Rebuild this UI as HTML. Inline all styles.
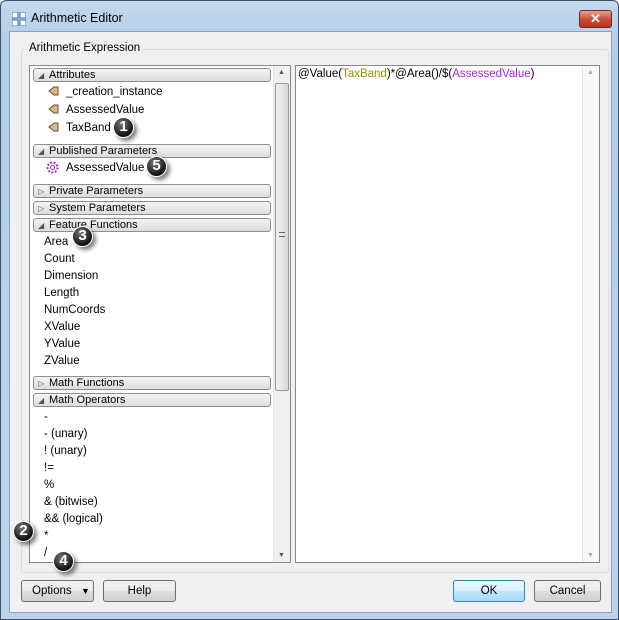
<!DOCTYPE html>
<html><head><style>
*{box-sizing:border-box}
body{margin:0;width:619px;height:620px;overflow:hidden;font-family:"Liberation Sans",sans-serif;font-size:11.5px;color:#000;background:#fff}
.win{position:absolute;left:0;top:0;width:619px;height:620px;background:linear-gradient(#c4d8ee,#b4cde8 40px,#bcd3ec);border:1px solid #3c5068;border-radius:6px 6px 0 0}
.title{position:absolute;left:30px;top:10px;font-size:12.5px}
.close{position:absolute;left:578px;top:9px;width:33px;height:18px;border:1px solid #6b2a22;border-radius:3px;background:linear-gradient(#e6a393,#c9503a 50%,#b8321c);color:#fff;font-weight:bold;text-align:center;font-size:13px;line-height:16px}
.client{position:absolute;left:8px;top:30px;width:603px;height:582px;background:#f0f0f0;border:1px solid #8aa0b8}
.grp{position:absolute;left:11px;top:17px;width:588px;height:524px;border:1px solid #d5dfe5;border-radius:3px}
.grpl{position:absolute;left:17px;top:10px;background:#f0f0f0;padding:0 2px}
.box{position:absolute;background:#fff;border:1px solid #828790}
.sb{position:absolute;right:0;top:0;width:17px;height:100%;background:#f0f0f0;border-left:1px solid #e4e4e4}
.thumb{position:absolute;left:1px;top:17px;width:14px;height:308px;border:1px solid #979797;border-radius:2px;background:linear-gradient(90deg,#f2f2f2,#d8d8d8)}
.hdr{position:absolute;left:3px;width:238px;height:14px;border:1px solid #8e8f8f;border-radius:3px;background:linear-gradient(#f4f4f4,#dcdcdc);font-size:11px;line-height:12px;padding-left:15px}
.hdr i{position:absolute;left:4px;top:1px;font-style:normal;font-size:8px;color:#555}
.it{position:absolute;left:14px;font-size:11.5px}
.it2{position:absolute;left:36px}
.dia{position:absolute;left:18px;width:11px;height:10px}
.btn{position:absolute;top:548px;height:22px;border:1px solid #707070;border-radius:3px;background:linear-gradient(#f2f2f2,#ebebeb 50%,#dddddd 51%,#cfcfcf);text-align:center;line-height:20px;font-size:11.5px}
.badge{position:absolute;width:21px;height:21px;border-radius:50%;background:radial-gradient(circle at 40% 30%,#777,#111 70%);border:1.5px solid #fff;color:#fff;font-weight:bold;font-size:15px;text-align:center;line-height:18px;box-shadow:3px 3px 4px rgba(0,0,0,.5)}
</style></head><body>
<div class="win">
<svg style="position:absolute;left:11px;top:11px" width="14" height="14"><rect x="0" y="0" width="6" height="6" fill="#fff" stroke="#3a6ab0"/><rect x="8" y="0" width="6" height="6" fill="#fff" stroke="#3a6ab0"/><rect x="0" y="8" width="6" height="6" fill="#fff" stroke="#3a6ab0"/><rect x="8" y="8" width="6" height="6" fill="#fff" stroke="#3a6ab0"/></svg>
<div class="title">Arithmetic Editor</div>
<div class="close">✕</div>
<div class="client">
<div class="grp"></div>
<div class="grpl">Arithmetic Expression</div>
<div class="box" style="left:19px;top:33px;width:262px;height:498px;overflow:hidden">
 <div class="hdr" style="top:2px"><i>◢</i>Attributes</div>
 <svg class="dia" style="top:20px" viewBox="0 0 11 10"><path d="M1 5L6 1H10V9H6Z" fill="#d9b98a" stroke="#6a5030"/></svg><div class="it2" style="top:20px">_creation_instance</div>
 <svg class="dia" style="top:38px" viewBox="0 0 11 10"><path d="M1 5L6 1H10V9H6Z" fill="#d9b98a" stroke="#6a5030"/></svg><div class="it2" style="top:38px">AssessedValue</div>
 <svg class="dia" style="top:56px" viewBox="0 0 11 10"><path d="M1 5L6 1H10V9H6Z" fill="#d9b98a" stroke="#6a5030"/></svg><div class="it2" style="top:56px">TaxBand</div>
 <div class="hdr" style="top:78px"><i>◢</i>Published Parameters</div>
 <svg style="position:absolute;left:16px;top:95px" width="13" height="13" viewBox="0 0 13 13"><circle cx="6.5" cy="6.5" r="5" fill="none" stroke="#a030c0" stroke-width="2" stroke-dasharray="2 1.5"/><circle cx="6.5" cy="6.5" r="2" fill="none" stroke="#a030c0"/></svg><div class="it2" style="top:96px">AssessedValue</div>
 <div class="hdr" style="top:118px"><i>▷</i>Private Parameters</div>
 <div class="hdr" style="top:135px"><i>▷</i>System Parameters</div>
 <div class="hdr" style="top:152px"><i>◢</i>Feature Functions</div>
 <div class="it" style="top:170px">Area</div>
 <div class="it" style="top:187px">Count</div>
 <div class="it" style="top:204px">Dimension</div>
 <div class="it" style="top:221px">Length</div>
 <div class="it" style="top:238px">NumCoords</div>
 <div class="it" style="top:255px">XValue</div>
 <div class="it" style="top:272px">YValue</div>
 <div class="it" style="top:289px">ZValue</div>
 <div class="hdr" style="top:310px"><i>▷</i>Math Functions</div>
 <div class="hdr" style="top:327px"><i>◢</i>Math Operators</div>
 <div class="it" style="top:345px">-</div>
 <div class="it" style="top:362px">- (unary)</div>
 <div class="it" style="top:379px">! (unary)</div>
 <div class="it" style="top:396px">!=</div>
 <div class="it" style="top:413px">%</div>
 <div class="it" style="top:430px">&amp; (bitwise)</div>
 <div class="it" style="top:447px">&amp;&amp; (logical)</div>
 <div class="it" style="top:464px">*</div>
 <div class="it" style="top:481px">/</div>
 <div class="sb"><div style="position:absolute;left:4px;top:3px;font-size:7px;color:#555">▲</div><div class="thumb"><div style="position:absolute;left:3px;top:148px;width:6px;height:5px;border-top:1px solid #666;border-bottom:1px solid #666"></div></div><div style="position:absolute;left:4px;bottom:3px;font-size:7px;color:#555">▼</div></div>
</div>
<div class="box" style="left:285px;top:33px;width:305px;height:498px">
 <div style="position:absolute;left:2px;top:2px">@Value(<span style="color:#9a8a00">TaxBand</span>)*@Area()/$(<span style="color:#b020e0">AssessedValue</span>)</div>
 <div class="sb" style="background:#f7f7f7"><div style="position:absolute;left:4px;top:3px;font-size:7px;color:#aaa">▲</div><div style="position:absolute;left:4px;bottom:3px;font-size:7px;color:#aaa">▼</div></div>
</div>
<div class="btn" style="left:11px;width:73px;text-align:left;padding-left:10px">Options<span style="position:absolute;left:59px;top:0;font-size:9px">▼</span></div>
<div class="btn" style="left:93px;width:73px">Help</div>
<div class="btn" style="left:443px;width:72px;border-color:#3c7fb1;background:linear-gradient(#eaf6fd,#d9f0fc 50%,#bee6fd 51%,#a7d9f5)">OK</div>
<div class="btn" style="left:524px;width:67px">Cancel</div>
</div>
<div class="badge" style="left:112px;top:116px">1</div>
<div class="badge" style="left:145px;top:155px">5</div>
<div class="badge" style="left:71px;top:225px">3</div>
<div class="badge" style="left:12px;top:520px">2</div>
<div class="badge" style="left:52px;top:550px">4</div>
</div>
</body></html>
